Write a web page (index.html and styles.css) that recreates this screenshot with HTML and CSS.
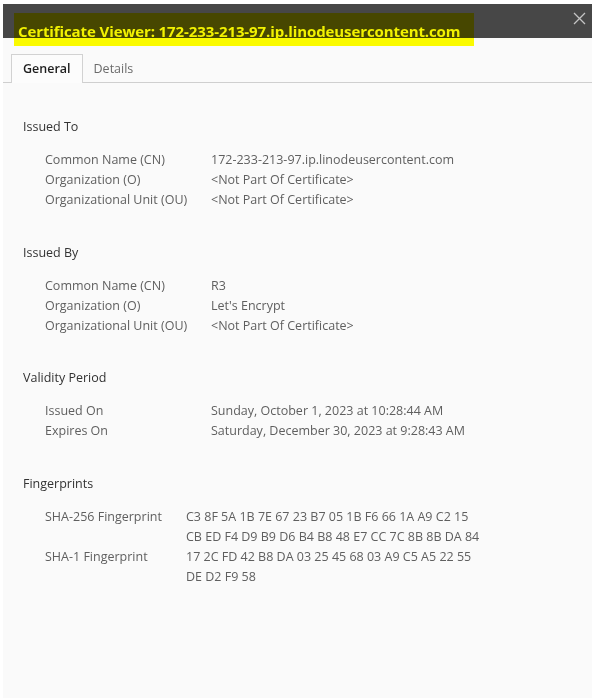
FILE: index.html
```html
<!DOCTYPE html>
<html>
<head>
<meta charset="utf-8">
<link rel="stylesheet" href="styles.css">
</head>
<body>
<div class="window">
  <div class="titlebar">
    <span class="title">Certificate Viewer: 172-233-213-97.ip.linodeusercontent.com</span>
    <svg class="close" width="13" height="13" viewBox="0 0 13 13"><path d="M1 1 L12 12 M12 1 L1 12" stroke="#c4c4c4" stroke-width="1.3" fill="none"/></svg>
    <div class="highlight"></div>
  </div>
  <div class="tabs">
    <div class="tab active">General</div>
    <div class="tab">Details</div>
  </div>
  <div class="content">
    <section class="sec">
      <h2>Issued To</h2>
      <div class="grid">
        <div class="lbl">Common Name (CN)</div><div class="val">172-233-213-97.ip.linodeusercontent.com</div>
        <div class="lbl">Organization (O)</div><div class="val">&lt;Not Part Of Certificate&gt;</div>
        <div class="lbl">Organizational Unit (OU)</div><div class="val">&lt;Not Part Of Certificate&gt;</div>
      </div>
    </section>
    <section class="sec">
      <h2>Issued By</h2>
      <div class="grid">
        <div class="lbl">Common Name (CN)</div><div class="val">R3</div>
        <div class="lbl">Organization (O)</div><div class="val">Let's Encrypt</div>
        <div class="lbl">Organizational Unit (OU)</div><div class="val">&lt;Not Part Of Certificate&gt;</div>
      </div>
    </section>
    <section class="sec">
      <h2>Validity Period</h2>
      <div class="grid">
        <div class="lbl">Issued On</div><div class="val">Sunday, October 1, 2023 at 10:28:44 AM</div>
        <div class="lbl">Expires On</div><div class="val">Saturday, December 30, 2023 at 9:28:43 AM</div>
      </div>
    </section>
    <section class="sec">
      <h2>Fingerprints</h2>
      <div class="grid fp">
        <div class="lbl">SHA-256 Fingerprint</div><div class="val">C3 8F 5A 1B 7E 67 23 B7 05 1B F6 66 1A A9 C2 15<br>CB ED F4 D9 B9 D6 B4 B8 48 E7 CC 7C 8B 8B DA 84</div>
        <div class="lbl">SHA-1 Fingerprint</div><div class="val">17 2C FD 42 B8 DA 03 25 45 68 03 A9 C5 A5 22 55<br>DE D2 F9 58</div>
      </div>
    </section>
  </div>
</div>
</body>
</html>
```

FILE: styles.css
```css
html, body {
  margin: 0;
  padding: 0;
  background: #ffffff;
}
body {
  padding: 4px 3px 1px 3px;
  font-family: "Open Sans", "Noto Sans", sans-serif;
}
.window {
  width: 589px;
  height: 694px;
  background: #fafafa;
  display: flex;
  flex-direction: column;
}
.titlebar {
  position: relative;
  height: 34px;
  background: #474747;
  display: flex;
  align-items: flex-end;
  justify-content: space-between;
  padding: 0 6px 0 15px;
  box-sizing: border-box;
}
.title {
  color: #f2f2f2;
  font-size: 15px;
  font-weight: 700;
  line-height: 18px;
  padding-bottom: 0;
  margin-bottom: -2px;
  letter-spacing: -0.1px;
}
.close {
  align-self: flex-start;
  margin-top: 8px;
}
.highlight {
  position: absolute;
  left: 11px;
  top: 9px;
  width: 460px;
  height: 33px;
  background: #ffff00;
  mix-blend-mode: multiply;
}
.tabs {
  margin-top: 16px;
  display: flex;
  align-items: flex-end;
  border-bottom: 1px solid #cfcfcf;
  padding-left: 8px;
  height: 28px;
}
.tab {
  font-size: 12.5px;
  line-height: 27px;
  padding: 0 11px;
  color: #6b6b6b;
}
.tab.active {
  color: #1e1e1e;
  font-weight: 600;
  background: #fcfcfc;
  border: 1px solid #d2d2d2;
  border-bottom: none;
  margin-bottom: -1px;
  padding-bottom: 1px;
}
.content {
  padding: 34px 0 0 20px;
}
.sec {
  margin-bottom: 32.5px;
}
.sec h2 {
  margin: 0 0 13px 0;
  font-size: 12.5px;
  font-weight: 400;
  color: #333333;
  line-height: 20px;
}
.grid {
  display: grid;
  grid-template-columns: 166px auto;
  padding-left: 22px;
  font-size: 12.5px;
  line-height: 20px;
  color: #5f5f5f;
}
.grid.fp {
  grid-template-columns: 141px auto;
}
```
